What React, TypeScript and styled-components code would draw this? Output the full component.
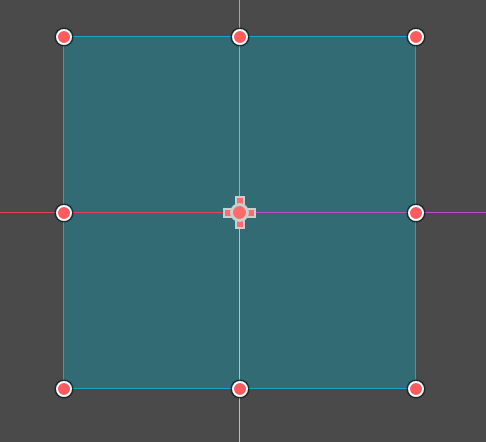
import React from "react";
import styled, { createGlobalStyle } from "styled-components";

const GlobalStyle = createGlobalStyle`
  html, body { margin: 0; padding: 0; background: #4a4a4a; }
  body { font-family: "Liberation Sans", Arial, sans-serif; }
`;

const Stage = styled.div`
  position: relative;
  width: 486px;
  height: 442px;
  box-sizing: border-box;
  padding: 36px 0 0 63px;
  background: #4a4a4a;
  overflow: hidden;
`;

const Square = styled.div`
  position: relative;
  width: 353px;
  height: 353px;
  box-sizing: border-box;
  border: 1px solid #17a9c4;
  background: #336b74;
`;

const VGuide = styled.div`
  position: absolute;
  left: 239px;
  top: 0;
  width: 1px;
  height: 442px;
  background: linear-gradient(to bottom, #8dc63f 0, #8dc63f 212px, #a4d1a2 212px, #a4d1a2 100%);
  z-index: 1;
`;

const HGuide = styled.div`
  position: absolute;
  left: 0;
  top: 212px;
  width: 486px;
  height: 1px;
  background: linear-gradient(to right, #e2425e 0, #e2425e 239px, #b452c2 239px, #b452c2 100%);
  z-index: 1;
`;

const Overlay = styled.div`
  position: absolute;
  left: 63px;
  top: 36px;
  width: 353px;
  height: 353px;
  z-index: 2;
`;

const Handle = styled.div<{ $x: number; $y: number }>`
  position: absolute;
  left: ${(p) => p.$x}px;
  top: ${(p) => p.$y}px;
  width: 12px;
  height: 12px;
  margin: -7.5px 0 0 -7.5px;
  border-radius: 50%;
  background: #ff5a60;
  border: 2px solid #ffffff;
  box-shadow: 0 0 0 1.5px rgba(20, 30, 32, 0.75), 0 0 3px rgba(0, 0, 0, 0.4);
`;

const Cross = styled.div`
  position: absolute;
  left: 176.5px;
  top: 176.5px;
  width: 34px;
  height: 34px;
  margin: -17px 0 0 -17px;
  display: grid;
  place-items: center;
`;

const ArmV = styled.div`
  grid-area: 1 / 1;
  width: 10px;
  height: 33px;
  background: #c7cfcf;
  display: flex;
  flex-direction: column;
  justify-content: space-between;
  align-items: center;
  padding: 2px 0;
  box-sizing: border-box;
`;

const ArmH = styled.div`
  grid-area: 1 / 1;
  width: 33px;
  height: 10px;
  background: #c7cfcf;
  display: flex;
  justify-content: space-between;
  align-items: center;
  padding: 0 2px;
  box-sizing: border-box;
`;

const TickV = styled.div`
  width: 6px;
  height: 7px;
  background: #ff6a6a;
`;

const TickH = styled.div`
  width: 7px;
  height: 6px;
  background: #ff6a6a;
`;

const Hub = styled.div`
  grid-area: 1 / 1;
  width: 13px;
  height: 13px;
  border-radius: 50%;
  background: #ff6a6a;
  border: 3px solid #c7cfcf;
`;

const handles: Array<[number, number]> = [
  [0, 0],
  [176, 0],
  [352, 0],
  [0, 176],
  [352, 176],
  [0, 352],
  [176, 352],
  [352, 352],
];

export default function App() {
  return (
    <>
      <GlobalStyle />
      <Stage>
        <Square />
        <VGuide />
        <HGuide />
        <Overlay>
          {handles.map(([x, y]) => (
            <Handle key={`${x}-${y}`} $x={x} $y={y} />
          ))}
          <Cross>
            <ArmV>
              <TickV />
              <TickV />
            </ArmV>
            <ArmH>
              <TickH />
              <TickH />
            </ArmH>
            <Hub />
          </Cross>
        </Overlay>
      </Stage>
    </>
  );
}
